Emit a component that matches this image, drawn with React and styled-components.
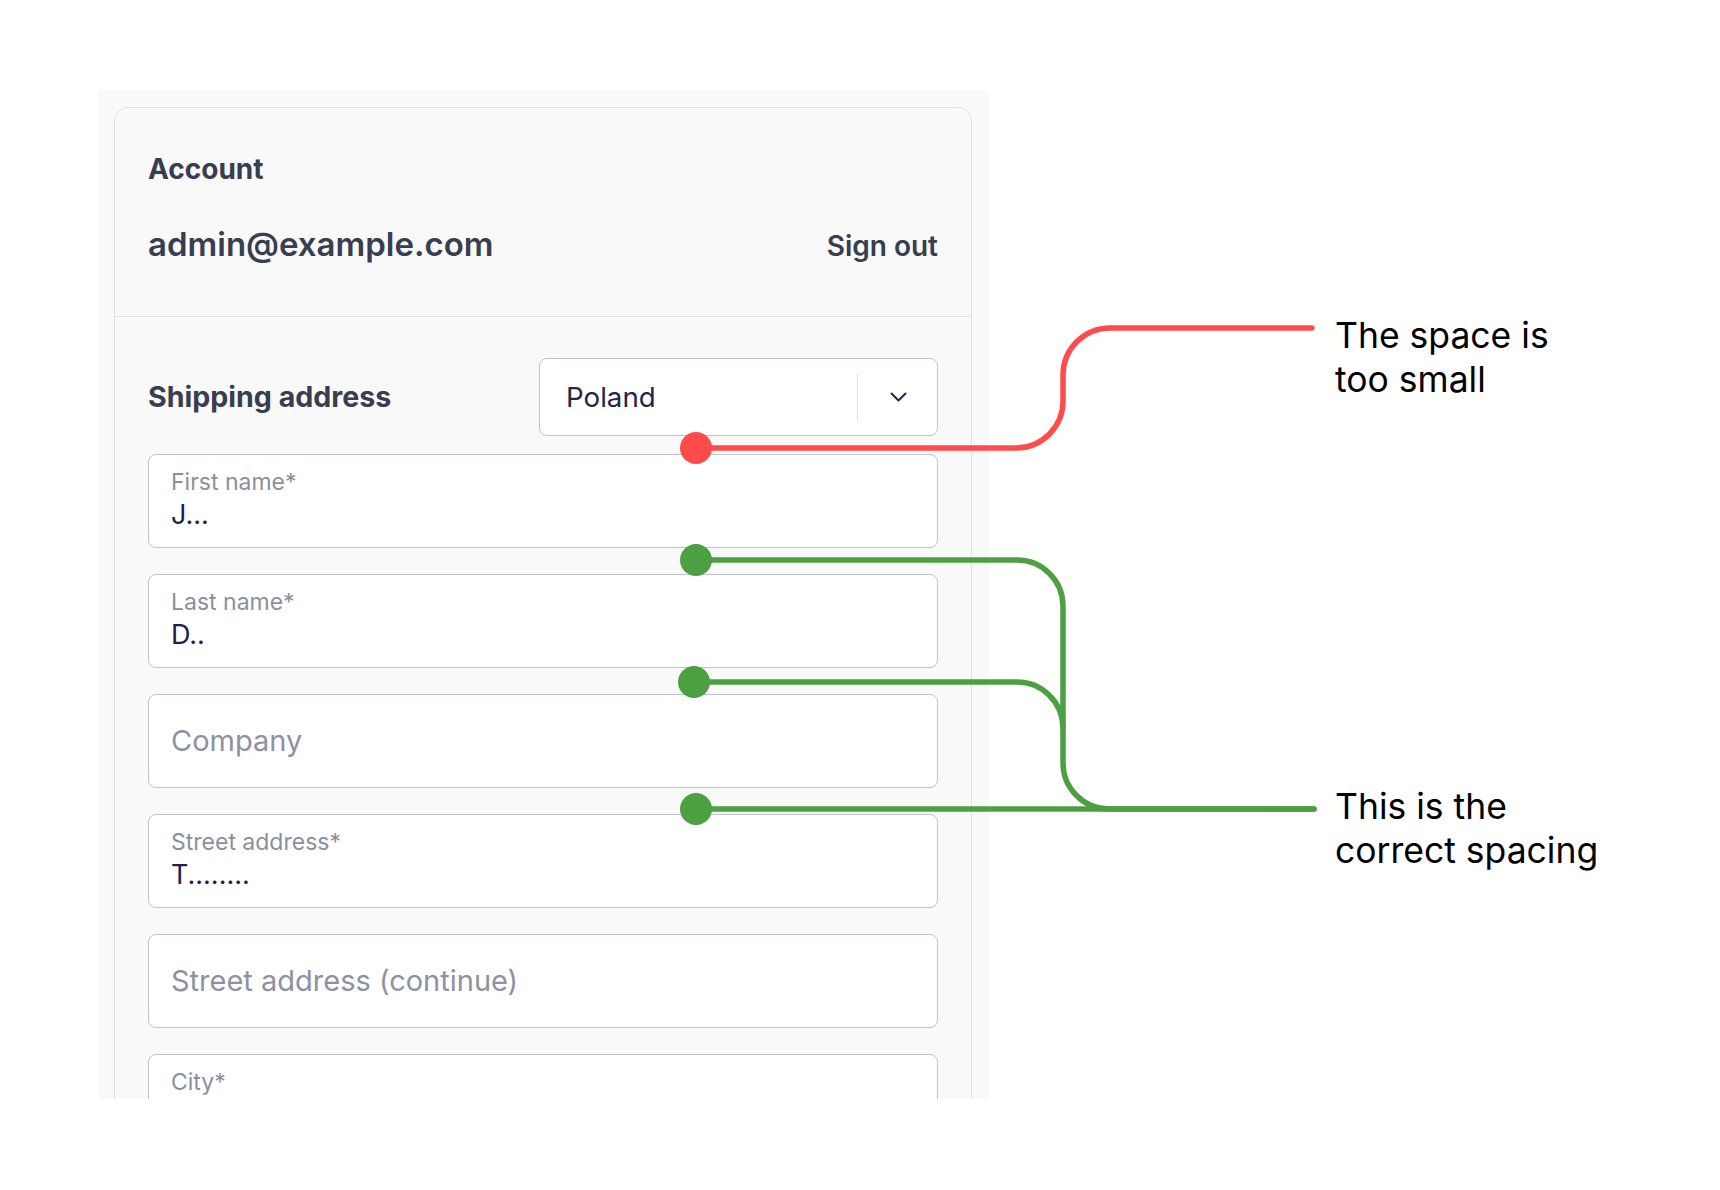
import React from "react";
import styled, { createGlobalStyle } from "styled-components";

const GlobalStyle = createGlobalStyle`
  html, body {
    margin: 0;
    padding: 0;
    background: #ffffff;
    font-family: Inter, "Noto Sans", "Liberation Sans", sans-serif;
  }
  * {
    box-sizing: border-box;
  }
`;

const Page = styled.div`
  position: relative;
  width: 1720px;
  height: 1190px;
  padding: 90px 0 0 98px;
  overflow: hidden;
`;

const Backdrop = styled.div`
  width: 891px;
  height: 1009px;
  background: #f9f9f9;
  padding: 17px 17px 0 16px;
  overflow: hidden;
`;

const Card = styled.div`
  background: #f9f9f9;
  border: 1.5px solid #e1e1e3;
  border-radius: 14px;
`;

const AccountSection = styled.div`
  padding: 44px 33px 51px 33px;
  border-bottom: 1.5px solid #e1e1e3;
`;

const SectionTitle = styled.div`
  font-size: ${(p) => p.$size || 28}px;
  line-height: 34px;
  font-weight: 700;
  color: #383d50;
`;

const AccountRow = styled.div`
  display: flex;
  justify-content: space-between;
  align-items: baseline;
  margin-top: 39px;
`;

const Email = styled.div`
  font-size: 33px;
  line-height: 38px;
  font-weight: 600;
  color: #383d50;
`;

const SignOut = styled.a`
  font-size: 28px;
  line-height: 38px;
  font-weight: 600;
  color: #383d50;
  cursor: pointer;
`;

const AddressSection = styled.div`
  padding: 41px 33px 0 33px;
  display: flex;
  flex-direction: column;
`;

const AddressHeader = styled.div`
  display: flex;
  align-items: center;
  justify-content: space-between;
  margin-bottom: 18px;
`;

const SelectBox = styled.div`
  width: 399px;
  height: 78px;
  background: #ffffff;
  border: 1.5px solid #bfc3d1;
  border-radius: 8px;
  display: flex;
  align-items: center;
`;

const SelectValue = styled.div`
  flex: 1;
  padding-left: 26px;
  font-size: 27.7px;
  color: #25244a;
`;

const SelectDivider = styled.div`
  width: 1.5px;
  height: 47px;
  background: #dde1ea;
`;

const SelectArrow = styled.div`
  width: 79px;
  display: flex;
  align-items: center;
  justify-content: center;
  padding-left: 2px;
`;

const Fields = styled.div`
  display: flex;
  flex-direction: column;
  gap: 26px;
`;

const Field = styled.div`
  height: 94px;
  background: #ffffff;
  border: 1.5px solid #bfc3d1;
  border-radius: 8px;
  padding: 0 24px 0 22px;
  display: flex;
  flex-direction: column;
  justify-content: ${(p) => (p.$empty ? "center" : "flex-start")};
  padding-top: ${(p) => (p.$empty ? "0" : "14px")};
`;

const FieldLabel = styled.div`
  font-size: 23px;
  line-height: 27px;
  color: #8a8fa0;
`;

const FieldValue = styled.div`
  font-size: 27px;
  line-height: 32px;
  margin-top: 3px;
  color: #22204a;
`;

const Placeholder = styled.div`
  font-size: 29px;
  line-height: 34px;
  color: #8d91a2;
`;

const Overlay = styled.svg`
  position: absolute;
  top: 0;
  left: 0;
  pointer-events: none;
`;

const Note = styled.div`
  position: absolute;
  left: 1335px;
  top: ${(p) => p.$top}px;
  font-size: 35.5px;
  line-height: 44px;
  color: #000000;
  white-space: nowrap;
`;

const RED = "#ff4b4b";
const GREEN = "#4da041";

function Chevron() {
  return (
    <svg width="17" height="11" viewBox="0 0 17 11" fill="none">
      <polyline
        points="1.5,1.5 8.5,8.5 15.5,1.5"
        stroke="#25244a"
        strokeWidth="2"
        strokeLinecap="round"
        strokeLinejoin="round"
      />
    </svg>
  );
}

const fields = [
  { label: "First name*", value: "J..." },
  { label: "Last name*", value: "D.." },
  { placeholder: "Company" },
  { label: "Street address*", value: "T........" },
  { placeholder: "Street address (continue)" },
  { label: "City*", value: "" },
];

export default function App() {
  return (
    <>
      <GlobalStyle />
      <Page>
        <Backdrop>
          <Card>
            <AccountSection>
              <SectionTitle>Account</SectionTitle>
              <AccountRow>
                <Email>admin@example.com</Email>
                <SignOut>Sign out</SignOut>
              </AccountRow>
            </AccountSection>
            <AddressSection>
              <AddressHeader>
                <SectionTitle $size={28.6}>Shipping address</SectionTitle>
                <SelectBox>
                  <SelectValue>Poland</SelectValue>
                  <SelectDivider />
                  <SelectArrow>
                    <Chevron />
                  </SelectArrow>
                </SelectBox>
              </AddressHeader>
              <Fields>
                {fields.map((f, i) =>
                  f.placeholder ? (
                    <Field key={i} $empty>
                      <Placeholder>{f.placeholder}</Placeholder>
                    </Field>
                  ) : (
                    <Field key={i}>
                      <FieldLabel>{f.label}</FieldLabel>
                      <FieldValue>{f.value}</FieldValue>
                    </Field>
                  )
                )}
              </Fields>
            </AddressSection>
          </Card>
        </Backdrop>

        <Overlay width="1720" height="1190" viewBox="0 0 1720 1190">
          <g fill="none" strokeWidth="5.5" strokeLinecap="round">
            <path
              d="M 696 448 H 1016 A 47 47 0 0 0 1063 401 V 375 A 47 47 0 0 1 1110 328 H 1312"
              stroke={RED}
            />
            <path
              d="M 696 560 H 1017 A 46 46 0 0 1 1063 606 V 763 A 46 46 0 0 0 1109 809 H 1314"
              stroke={GREEN}
            />
            <path d="M 694 682 H 1017 A 46 46 0 0 1 1063 728" stroke={GREEN} />
            <path d="M 696 809 H 1314" stroke={GREEN} />
          </g>
          <circle cx="696" cy="448" r="16" fill={RED} />
          <circle cx="696" cy="560" r="16" fill={GREEN} />
          <circle cx="694" cy="682" r="16" fill={GREEN} />
          <circle cx="696" cy="809" r="16" fill={GREEN} />
        </Overlay>

        <Note $top={314}>
          The space is
          <br />
          too small
        </Note>
        <Note $top={785}>
          This is the
          <br />
          correct spacing
        </Note>
      </Page>
    </>
  );
}
